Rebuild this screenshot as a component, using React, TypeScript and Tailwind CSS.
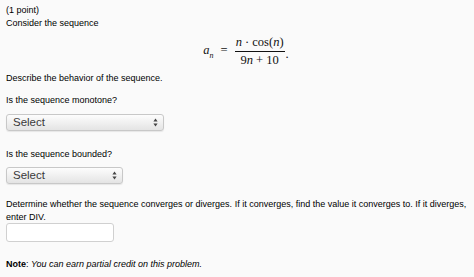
import React from 'react'

function SelectBox({ width }: { width: string }) {
  return (
    <div
      className={`${width} h-[17px] flex items-center justify-between rounded-[3px] border border-[#c8c8c8] bg-gradient-to-b from-[#fdfdfd] to-[#e4e4e4] pl-[6px] pr-[5px] shadow-[0_1px_1px_rgba(0,0,0,0.08)]`}
    >
      <span className="text-[11.5px] leading-none text-[#3a3a3a]">Select</span>
      <svg width="5" height="9" viewBox="0 0 5 9">
        <path d="M2.5 0.5 L4.6 3.6 H0.4 Z" fill="#444" />
        <path d="M2.5 8.5 L4.6 5.4 H0.4 Z" fill="#444" />
      </svg>
    </div>
  )
}

export default function App() {
  return (
    <div
      className="w-[474px] h-[277px] overflow-hidden bg-[#fafafa] text-[#000] px-[6px] pt-[4px] text-[9px] leading-[13px]"
      style={{ fontFamily: '"Liberation Sans", Arial, sans-serif' }}
    >
      <p>(1 point)</p>
      <p>Consider the sequence</p>

      {/* formula */}
      <div
        className="flex items-center justify-center h-[34px] mt-[4px] pl-[18px] text-[12.5px] leading-none text-[#111]"
        style={{ fontFamily: '"Liberation Serif", "Times New Roman", serif' }}
      >
        <span className="flex items-baseline -mt-[1px]">
          <span className="italic">
            a<sub className="text-[8px] align-[-2px]">n</sub>
          </span>
          <span className="mx-[7px]">=</span>
        </span>
        <span className="inline-flex flex-col items-center">
          <span className="px-[1px] pb-[2px]">
            <i>n</i> · cos(<i>n</i>)
          </span>
          <span className="self-stretch border-t border-[#111]" />
          <span className="px-[1px] pt-[2px]">
            9<i>n</i> + 10
          </span>
        </span>
        <span className="ml-[1px] self-center mt-[6px]">.</span>
      </div>

      <p className="mt-[4px]">Describe the behavior of the sequence.</p>

      <p className="mt-[9px]">Is the sequence monotone?</p>
      <div className="mt-[7px]">
        <SelectBox width="w-[158px]" />
      </div>

      <p className="mt-[17px]">Is the sequence bounded?</p>
      <div className="mt-[6px]">
        <SelectBox width="w-[117px]" />
      </div>

      <p className="mt-[14px] whitespace-nowrap">
        Determine whether the sequence converges or diverges. If it converges, find the value it converges to. If it diverges,
        <br />
        enter DIV.
      </p>
      <div className="-mt-[1px] w-[108px] h-[19px] rounded-[3px] border border-[#d0d0d0] bg-white" />

      <p className="mt-[16px]">
        <b>Note</b>: <i>You can earn partial credit on this problem.</i>
      </p>
    </div>
  )
}
